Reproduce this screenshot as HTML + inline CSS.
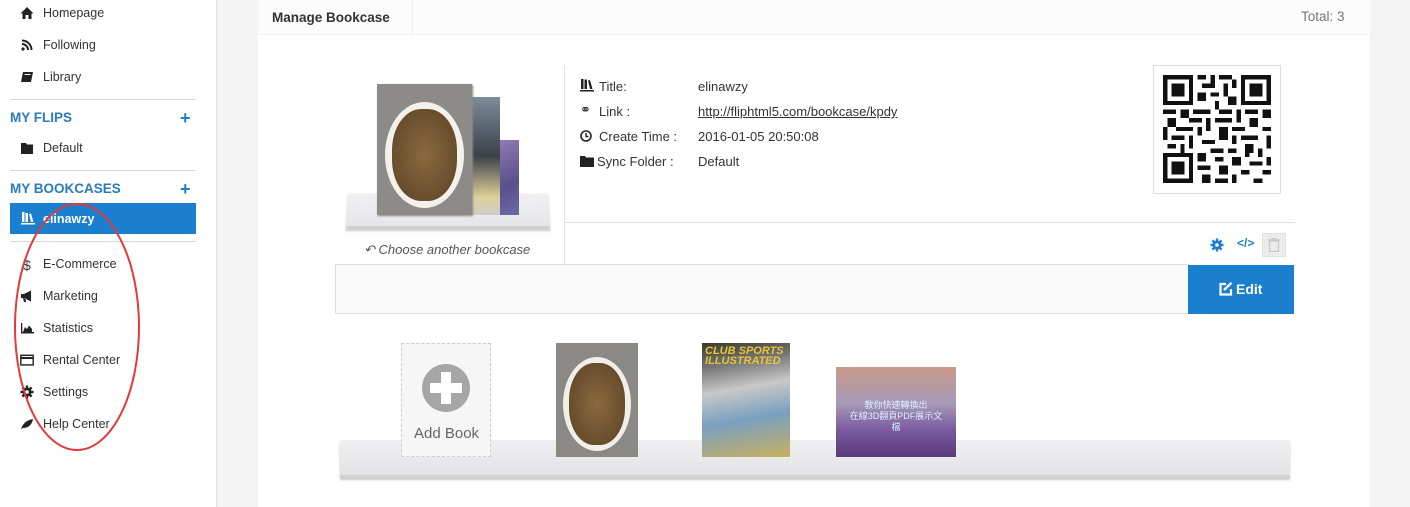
<!DOCTYPE html>
<html><head><meta charset="utf-8"><style>
*{margin:0;padding:0;box-sizing:border-box}
body{width:1410px;height:507px;overflow:hidden;background:#f4f4f4;font-family:"Liberation Sans",Arial,sans-serif;font-size:13px;color:#333;position:relative}
.a{position:absolute}
#side{left:0;top:0;width:217px;height:507px;background:#fff;border-right:1px solid #e2e2e2}
.it{position:absolute;left:43px;font-size:12.5px;color:#333}
.ic{position:absolute;left:20px;width:14px;height:14px}
.sep{position:absolute;left:10px;width:186px;height:1px;background:#d6d6d6}
.hd{position:absolute;left:10px;font-weight:bold;color:#2a7ac0;font-size:13.5px}
.plus{position:absolute;left:180px;color:#1b7fcf;font-weight:bold;font-size:18px}
#main{left:258px;top:0;width:1112px;height:507px;background:#fff}
.lab{position:absolute;left:599px;font-size:13px;color:#333}
.val{position:absolute;left:698px;font-size:13px;color:#333}
</style></head><body>
<div id="side" class="a">
  <svg class="ic" style="top:6px" viewBox="0 0 14 14"><path d="M7 1L0.5 7.5H2.5V13H5.5V9H8.5V13H11.5V7.5H13.5Z" fill="#222"/></svg>
  <div class="it" style="top:6px">Homepage</div>
  <svg class="ic" style="top:38px" viewBox="0 0 14 14"><circle cx="3" cy="11" r="1.6" fill="#222"/><path d="M2 6a6 6 0 0 1 6 6M2 2.5a9.5 9.5 0 0 1 9.5 9.5" stroke="#222" stroke-width="2" fill="none"/></svg>
  <div class="it" style="top:38px">Following</div>
  <svg class="ic" style="top:70px" viewBox="0 0 14 14"><path d="M3 2H13L11 12H1Z" fill="#222"/><path d="M4.5 4.5H10.5" stroke="#fff"/></svg>
  <div class="it" style="top:70px">Library</div>
  <div class="sep" style="top:99px"></div>
  <div class="hd" style="top:110px">MY FLIPS</div><div class="plus" style="top:108px">+</div>
  <svg class="ic" style="top:141px" viewBox="0 0 14 14"><path d="M1 2H6L7 3.5H13V13H1Z" fill="#222"/></svg>
  <div class="it" style="top:141px">Default</div>
  <div class="sep" style="top:170px"></div>
  <div class="hd" style="top:181px">MY BOOKCASES</div><div class="plus" style="top:179px">+</div>
  <div class="a" style="left:10px;top:203px;width:186px;height:31px;background:#1b7fcf"></div>
  <svg class="ic" style="top:211px;left:21px" viewBox="0 0 14 14"><path d="M1 1H3.5V11H1ZM4.5 2H7V11H4.5ZM8 3L10 2.5L12.5 11H10Z M0 12H14V13.5H0Z" fill="#fff"/></svg>
  <div class="it" style="top:212px;color:#fff;font-weight:bold">elinawzy</div>
  <div class="sep" style="top:241px"></div>
  <div class="it" style="top:257px;left:23px;font-size:14px">$</div>
  <div class="it" style="top:257px">E-Commerce</div>
  <svg class="ic" style="top:289px" viewBox="0 0 14 14"><path d="M1 5H4L11 1.5V12.5L4 9H1Z M3 9L4 13H6L5.5 9" fill="#222"/></svg>
  <div class="it" style="top:289px">Marketing</div>
  <svg class="ic" style="top:321px" viewBox="0 0 14 14"><path d="M1 2V12.5H14V11H2.3V2Z M3 11L5 6L7 8L9 4.5L12 8V11Z" fill="#222"/></svg>
  <div class="it" style="top:321px">Statistics</div>
  <svg class="ic" style="top:353px" viewBox="0 0 14 14"><rect x="0.8" y="2.3" width="12.4" height="9.6" fill="none" stroke="#222" stroke-width="1.4"/><rect x="1" y="4" width="12" height="2" fill="#222"/></svg>
  <div class="it" style="top:353px">Rental Center</div>
  <svg class="ic" style="top:385px" viewBox="0 0 14 14"><circle cx="7" cy="7" r="4.5" fill="#222"/><path d="M7 0.5V13.5M0.5 7H13.5M2.4 2.4L11.6 11.6M11.6 2.4L2.4 11.6" stroke="#222" stroke-width="2.4"/><circle cx="7" cy="7" r="1.8" fill="#fff"/></svg>
  <div class="it" style="top:385px">Settings</div>
  <svg class="ic" style="top:417px" viewBox="0 0 14 14"><path d="M1 12C3 6 7 3 13 2C12 8 8 11 3 11Z" fill="#222"/></svg>
  <div class="it" style="top:417px">Help Center</div>
</div>
<svg class="a" style="left:0;top:0" width="220" height="507"><ellipse cx="77" cy="327" rx="62" ry="123" fill="none" stroke="#e23a3a" stroke-width="2"/></svg>

<div id="main" class="a">
  <div class="a" style="left:0;top:0;width:1112px;height:35px;background:#fcfcfc;border-bottom:1px solid #efefef"></div>
  <div class="a" style="left:154px;top:0;width:1px;height:35px;background:#eee"></div>
  <div class="a" style="left:14px;top:10px;font-weight:bold;font-size:13.5px;color:#333">Manage Bookcase</div>
  <div class="a" style="left:1043px;top:9px;font-size:13.5px;color:#777">Total: 3</div>
</div>

<div class="a" style="left:347px;top:193px;width:202px;height:36px;background:linear-gradient(#f1f1f3,#e6e6e8);border-bottom:3px solid #d0d0d0;box-shadow:0 2px 2px #ccc;transform:perspective(200px) rotateX(8deg)"></div>
<div class="a" style="left:498px;top:140px;width:21px;height:75px;background:linear-gradient(160deg,#8f7ab0,#5a4f8c 60%,#6c6aa6)"></div>
<div class="a" style="left:470px;top:97px;width:30px;height:118px;background:linear-gradient(#7c8d9a,#3a4048 50%,#e0d09a 85%,#ccc)"></div>
<div class="a" style="left:377px;top:84px;width:95px;height:131px;background:#8c8b88;box-shadow:1px 1px 2px #888">
  <div class="a" style="left:8px;top:18px;width:79px;height:106px;border-radius:50%;background:#f4f1ec"></div>
  <div class="a" style="left:15px;top:25px;width:65px;height:92px;border-radius:45%;background:radial-gradient(#8a6a3e,#5a4226)"></div>
</div>
<div class="a" style="left:364px;top:242px;font-size:13px;color:#555;font-style:italic">↶ Choose another bookcase</div>
<div class="a" style="left:564px;top:65px;width:1px;height:199px;background:#e3e3e3"></div>

<svg class="a" style="left:580px;top:78px" width="14" height="14" viewBox="0 0 14 14"><path d="M1 1H3.5V11H1ZM4.5 1.5H7V11H4.5ZM8 2.5L10 2L12.5 11H10Z M0 12H14V13.5H0Z" fill="#222"/></svg>
<div class="lab" style="top:79px">Title:</div><div class="val" style="top:79px">elinawzy</div>
<div class="a" style="left:580px;top:102px;font-size:13px;color:#222">⚭</div>
<div class="lab" style="top:104px">Link :</div><div class="val" style="top:104px;text-decoration:underline">http://fliphtml5.com/bookcase/kpdy</div>
<svg class="a" style="left:580px;top:130px" width="12" height="12" viewBox="0 0 12 12"><circle cx="6" cy="6" r="5" fill="none" stroke="#222" stroke-width="1.6"/><path d="M6 3V6.5H8.5" stroke="#222" stroke-width="1.4" fill="none"/></svg>
<div class="lab" style="top:129px">Create Time :</div><div class="val" style="top:129px">2016-01-05 20:50:08</div>
<svg class="a" style="left:580px;top:155px" width="14" height="12" viewBox="0 0 14 12"><path d="M0 1H5L6 2.5H14V12H0Z" fill="#222"/></svg>
<div class="lab" style="top:154px;left:597px">Sync Folder :</div><div class="val" style="top:154px">Default</div>

<div class="a" style="left:1153px;top:65px;width:128px;height:129px;border:1px solid #ddd;background:#fff"></div>
<svg class="a" style="left:1163px;top:75px" width="108" height="108" viewBox="0 0 25 25" shape-rendering="crispEdges">
<g fill="#111"><path d="M0 0h7v7h-7zM18 0h7v7h-7zM0 18h7v7h-7z"/></g>
<g fill="#fff"><path d="M1 1h5v5h-5zM19 1h5v5h-5zM1 19h5v5h-5z"/></g>
<g fill="#111"><path d="M2 2h3v3h-3zM20 2h3v3h-3zM2 20h3v3h-3z"/>
<path d="M8 0h2v1h-2zM11 0h1v2h-1zM13 0h3v1h-3zM9 2h3v1h-3zM14 2h1v3h-1zM16 1h1v2h-1zM8 4h2v2h-2zM11 4h2v1h-2zM15 5h2v2h-2zM12 6h1v2h-1z
M0 8h3v1h-3zM4 8h2v2h-2zM7 8h4v1h-4zM13 8h3v1h-3zM17 8h1v3h-1zM19 8h3v1h-3zM23 8h2v2h-2z
M1 10h2v2h-2zM6 10h3v1h-3zM10 10h1v3h-1zM12 10h4v1h-4zM20 10h2v2h-2zM0 12h1v3h-1zM3 12h4v1h-4zM8 12h1v2h-1zM13 12h2v3h-2zM16 12h3v1h-3zM23 12h2v1h-2z
M2 14h3v1h-3zM6 14h1v3h-1zM9 15h3v1h-3zM16 14h1v2h-1zM18 14h4v1h-4zM24 14h1v3h-1zM1 16h2v1h-2zM4 16h1v2h-1zM11 17h3v1h-3zM15 17h2v1h-2zM19 16h2v2h-2zM22 17h1v2h-1z
M8 18h2v2h-2zM12 19h2v1h-2zM16 19h2v2h-2zM20 20h3v1h-3zM8 21h3v1h-3zM13 21h2v2h-2zM18 22h2v1h-2zM23 22h2v1h-2zM9 23h2v2h-2zM12 24h3v1h-3zM16 23h1v2h-1zM21 24h2v1h-2zM19 18h1v1h-1zM24 19h1v2h-1z"/></g>
</svg>

<div class="a" style="left:565px;top:222px;width:730px;height:1px;background:#e3e3e3"></div>
<svg class="a" style="left:1210px;top:238px" width="14" height="14" viewBox="0 0 14 14"><circle cx="7" cy="7" r="4.5" fill="#1b7fcf"/><path d="M7 0.5V13.5M0.5 7H13.5M2.4 2.4L11.6 11.6M11.6 2.4L2.4 11.6" stroke="#1b7fcf" stroke-width="2.4"/><circle cx="7" cy="7" r="1.8" fill="#fff"/></svg>
<div class="a" style="left:1237px;top:236px;color:#1b7fcf;font-weight:bold;font-size:12px">&lt;/&gt;</div>
<div class="a" style="left:1262px;top:233px;width:24px;height:24px;background:#ececec;border:1px solid #e0e0e0"></div>
<svg class="a" style="left:1268px;top:238px" width="12" height="14" viewBox="0 0 12 14"><path d="M0 2H12M4 2V0.5H8V2M1.5 3H10.5V13.5H1.5Z" stroke="#c8c8c8" fill="none" stroke-width="1.2"/></svg>

<div class="a" style="left:335px;top:264px;width:854px;height:50px;background:#fafafa;border:1px solid #ddd"></div>
<div class="a" style="left:1188px;top:265px;width:106px;height:49px;background:#1b7fcf"></div>
<svg class="a" style="left:1219px;top:282px" width="14" height="14" viewBox="0 0 14 14"><path d="M7 2H1.5V12.5H12V7" stroke="#fff" stroke-width="2.2" fill="none"/><path d="M5 8L12.5 0.8" stroke="#fff" stroke-width="2.4"/></svg>
<div class="a" style="left:1236px;top:281px;color:#fff;font-weight:bold;font-size:14px">Edit</div>

<div class="a" style="left:340px;top:440px;width:950px;height:38px;background:linear-gradient(#f0f0f2,#e3e3e5);border-bottom:3px solid #d2d2d2;box-shadow:0 2px 2px #c8c8c8"></div>
<div class="a" style="left:401px;top:343px;width:90px;height:114px;background:#f6f6f6;border:1px dashed #ccc"></div>
<div class="a" style="left:422px;top:364px;width:48px;height:48px;border-radius:50%;background:#a6a6a6"></div>
<div class="a" style="left:441px;top:372px;width:10px;height:32px;background:#fff"></div>
<div class="a" style="left:430px;top:383px;width:32px;height:10px;background:#fff"></div>
<div class="a" style="left:414px;top:425px;font-size:15px;color:#666">Add Book</div>
<div class="a" style="left:556px;top:343px;width:82px;height:114px;background:#8a8986">
  <div class="a" style="left:7px;top:14px;width:68px;height:94px;border-radius:50%;background:#f2efea"></div>
  <div class="a" style="left:13px;top:20px;width:56px;height:82px;border-radius:45%;background:radial-gradient(#8a6a3e,#5a4226)"></div>
</div>
<div class="a" style="left:702px;top:343px;width:88px;height:114px;background:linear-gradient(170deg,#3a3a2a 0%,#777 20%,#c8c8c8 40%,#7aa0c0 65%,#c8b060 100%)"></div>
<div class="a" style="left:705px;top:346px;font-size:11px;font-weight:bold;color:#e8c43a;font-style:italic;line-height:10px">CLUB SPORTS<br>ILLUSTRATED</div>
<div class="a" style="left:836px;top:367px;width:120px;height:90px;background:linear-gradient(#c89a8a 0%,#a89ab8 40%,#7a5aa0 70%,#5a3a7a 100%)"></div>
<div class="a" style="left:846px;top:400px;width:100px;font-size:9px;color:#d8f0ff;text-align:center;line-height:11px;font-family:'Liberation Sans','Noto Sans CJK TC',sans-serif">教你快速轉換出<br>在線3D翻頁PDF展示文檔</div>
</body></html>
